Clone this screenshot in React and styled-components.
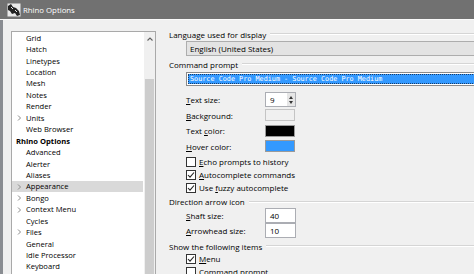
import React from 'react';
import styled, { createGlobalStyle } from 'styled-components';

const Global = createGlobalStyle`
  html, body { margin: 0; padding: 0; background: #f0f0f0; }
  body { font-family: "Open Sans", "Noto Sans", sans-serif; color: #000; }
`;

const Window = styled.div`
  width: 474px;
  height: 274px;
  overflow: hidden;
  display: flex;
  flex-direction: column;
  background: #f0f0f0;
`;

const TitleBar = styled.div`
  flex: none;
  height: 19px;
  background: #717171;
  border-bottom: 1px solid #fafafa;
  display: flex;
  align-items: center;
  gap: 2px;
  padding-left: 7px;
  color: #fff;
  font-size: 7.8px;
`;

const Body = styled.div`
  flex: 1;
  display: flex;
  border-left: 3px solid #8a8d92;
  min-height: 0;
`;

const Side = styled.div`
  flex: none;
  padding: 11px 0 0 8px;
`;

const Tree = styled.div`
  width: 143px;
  height: 300px;
  border: 1px solid #a9a9a9;
  display: flex;
  background: #fff;
`;

const TreeList = styled.div`
  flex: 1;
`;

const TreeRow = styled.div`
  height: 11.45px;
  display: flex;
  align-items: center;
  margin-right: 1px;
  padding-left: ${p => (p.$top ? '4px' : '14px')};
  font-size: 7.6px;
  font-weight: ${p => (p.$top ? 700 : 400)};
  background: ${p => (p.$selected ? '#d9d9d9' : 'transparent')};
  position: relative;
  white-space: nowrap;
`;

const Chevron = styled.span`
  position: absolute;
  left: 5px;
  top: 3px;
  width: 5px;
  height: 6px;
  display: flex;
`;

const Scroll = styled.div`
  flex: none;
  width: 11px;
  background: #f0f0f0;
  display: flex;
  flex-direction: column;
  align-items: center;
`;

const ScrollArrow = styled.div`
  height: 12px;
  display: flex;
  align-items: center;
  justify-content: center;
  margin-top: 1px;
`;

const Thumb = styled.div`
  margin-top: 34px;
  width: 9px;
  flex: 1;
  background: #cdcdcd;
`;

const Content = styled.div`
  flex: none;
  width: 330px;
  margin-left: 4px;
  padding: 8px 0 0 9px;
  font-size: 8px;
`;

const GroupHeader = styled.div`
  height: 12px;
  display: flex;
  align-items: center;
  gap: 4px;
  margin-top: ${p => p.$gap || 0}px;
  white-space: nowrap;
  &::after {
    content: '';
    flex: 1;
    height: 0;
    border-top: 1px solid #d5d5d5;
    border-bottom: 1px solid #fff;
  }
`;

const Indent = styled.div`
  padding-left: 17px;
  margin-top: ${p => p.$gap || 0}px;
`;

const Combo = styled.div`
  height: 13px;
  border: 1px solid #adadad;
  background: #e3e3e3;
  display: flex;
  align-items: center;
  padding-left: 3px;
`;

const FontList = styled.div`
  height: 14px;
  border: 1px solid #8a8a8a;
  padding: 1px;
  box-sizing: border-box;
  background: #fff;
  display: flex;
`;

const FontSel = styled.div`
  flex: 1;
  background: #3399ff;
  color: #fff;
  font-family: "DejaVu Sans Mono", "Liberation Mono", monospace;
  font-size: 6.8px;
  display: flex;
  align-items: center;
  padding-left: 1px;
  white-space: nowrap;
  border: 1px dotted #1a3c66;
`;

const FieldRow = styled.div`
  height: 15.5px;
  display: flex;
  align-items: center;
`;

const Label = styled.span`
  width: 79px;
  flex: none;
`;

const U = styled.span`
  text-decoration: underline;
  text-underline-offset: 1px;
`;

const Input = styled.div`
  width: 25px;
  height: 13px;
  border: 1px solid #abadb3;
  background: #fff;
  display: flex;
  align-items: center;
  padding-left: 4px;
  position: relative;
`;

const Spin = styled.div`
  position: absolute;
  right: 0;
  top: 0;
  bottom: 0;
  width: 8px;
  background: #e6e6e6;
  display: flex;
  flex-direction: column;
  align-items: center;
  justify-content: center;
  gap: 2px;
`;

const Swatch = styled.div`
  width: 28px;
  height: 10px;
  border: 1px solid ${p => (p.$color === '#f0f0f0' ? '#c4c4c4' : '#9a9a9a')};
  background: ${p => p.$color};
`;

const CheckRow = styled.div`
  height: 13px;
  display: flex;
  align-items: center;
  gap: 3px;
  margin-top: ${p => p.$gap || 0}px;
  white-space: nowrap;
`;

const Box = styled.span`
  width: 8px;
  height: 8px;
  border: 1px solid #333;
  background: #fff;
  display: flex;
  flex: none;
`;

const RhinoIcon = () => (
  <svg width="14" height="14" viewBox="0 0 14 14">
    <rect x="0.5" y="0.5" width="13" height="13" fill="#e9e9e9" />
    <path d="M1 3 L4 1 L6 4 L9 5 L12 8 L13 12 L10 13 L8 10 L5 11 L3 8 L1 7 Z" fill="#222" />
    <path d="M4 4 L6 6 M8 7 L10 9" stroke="#e9e9e9" strokeWidth="1" />
  </svg>
);

const ChevronIcon = () => (
  <svg width="5" height="6" viewBox="0 0 5 6">
    <path d="M1 0.5 L3.5 3 L1 5.5" fill="none" stroke="#8a8a8a" strokeWidth="1" />
  </svg>
);

const Check = ({ on }) => (
  <Box>
    {on && (
      <svg width="8" height="8" viewBox="0 0 8 8">
        <path d="M1 4 L3 6.2 L7 1.5" fill="none" stroke="#222" strokeWidth="1.1" />
      </svg>
    )}
  </Box>
);

const treeItems = [
  { t: 'Grid' },
  { t: 'Hatch' },
  { t: 'Linetypes' },
  { t: 'Location' },
  { t: 'Mesh' },
  { t: 'Notes' },
  { t: 'Render' },
  { t: 'Units', sub: true },
  { t: 'Web Browser' },
  { t: 'Rhino Options', top: true },
  { t: 'Advanced' },
  { t: 'Alerter' },
  { t: 'Aliases' },
  { t: 'Appearance', sub: true, sel: true },
  { t: 'Bongo', sub: true },
  { t: 'Context Menu', sub: true },
  { t: 'Cycles' },
  { t: 'Files', sub: true },
  { t: 'General' },
  { t: 'Idle Processor' },
  { t: 'Keyboard' },
];

export default function App() {
  return (
    <>
      <Global />
      <Window>
        <TitleBar>
          <RhinoIcon />
          <span>Rhino Options</span>
        </TitleBar>
        <Body>
          <Side>
            <Tree>
              <TreeList>
                {treeItems.map(it => (
                  <TreeRow key={it.t} $top={it.top} $selected={it.sel}>
                    {it.sub && (
                      <Chevron>
                        <ChevronIcon />
                      </Chevron>
                    )}
                    {it.t}
                  </TreeRow>
                ))}
              </TreeList>
              <Scroll>
                <ScrollArrow>
                  <svg width="6" height="4" viewBox="0 0 6 4">
                    <path d="M0.5 3.5 L3 1 L5.5 3.5" fill="none" stroke="#606060" strokeWidth="1.1" />
                  </svg>
                </ScrollArrow>
                <Thumb />
              </Scroll>
            </Tree>
          </Side>
          <Content>
            <GroupHeader>Language used for display</GroupHeader>
            <Indent $gap={1}>
              <Combo>English (United States)</Combo>
            </Indent>
            <GroupHeader $gap={2}>Command prompt</GroupHeader>
            <Indent $gap={2}>
              <FontList>
                <FontSel>Source Code Pro Medium - Source Code Pro Medium</FontSel>
              </FontList>
            </Indent>
            <Indent $gap={6}>
              <FieldRow>
                <Label><U>T</U>ext size:</Label>
                <Input>
                  9
                  <Spin>
                    <svg width="4" height="3" viewBox="0 0 4 3"><path d="M0 3 L2 0 L4 3 Z" fill="#333" /></svg>
                    <svg width="4" height="3" viewBox="0 0 4 3"><path d="M0 0 L2 3 L4 0 Z" fill="#333" /></svg>
                  </Spin>
                </Input>
              </FieldRow>
              <FieldRow>
                <Label><U>B</U>ackground:</Label>
                <Swatch $color="#f0f0f0" />
              </FieldRow>
              <FieldRow>
                <Label>Text <U>c</U>olor:</Label>
                <Swatch $color="#000" />
              </FieldRow>
              <FieldRow>
                <Label><U>H</U>over color:</Label>
                <Swatch $color="#3399ff" />
              </FieldRow>
              <CheckRow $gap={1}>
                <Check />
                <span><U>E</U>cho prompts to history</span>
              </CheckRow>
              <CheckRow>
                <Check on />
                <span><U>A</U>utocomplete commands</span>
              </CheckRow>
              <CheckRow>
                <Check on />
                <span>Use <U>f</U>uzzy autocomplete</span>
              </CheckRow>
            </Indent>
            <GroupHeader $gap={1.5}>Direction arrow icon</GroupHeader>
            <Indent>
              <FieldRow>
                <Label><U>S</U>haft size:</Label>
                <Input>40</Input>
              </FieldRow>
              <FieldRow>
                <Label><U>A</U>rrowhead size:</Label>
                <Input>10</Input>
              </FieldRow>
            </Indent>
            <GroupHeader $gap={1.5}>Show the following items</GroupHeader>
            <Indent>
              <CheckRow>
                <Check on />
                <span><U>M</U>enu</span>
              </CheckRow>
              <CheckRow>
                <Check />
                <span><U>C</U>ommand prompt</span>
              </CheckRow>
            </Indent>
          </Content>
        </Body>
      </Window>
    </>
  );
}
